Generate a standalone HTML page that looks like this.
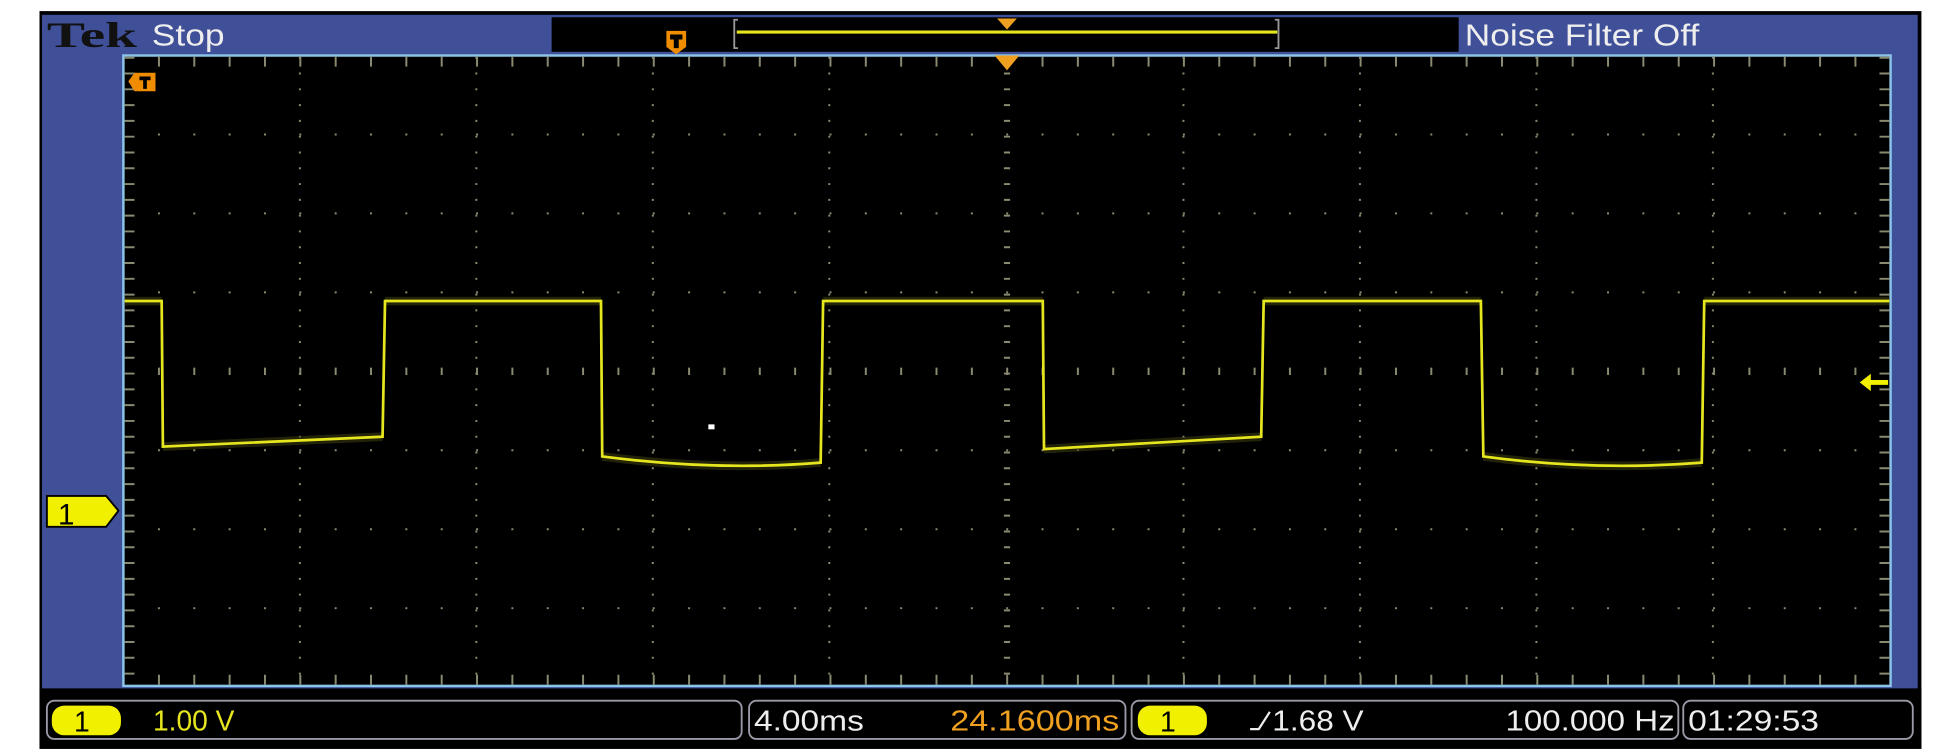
<!DOCTYPE html>
<html><head><meta charset="utf-8"><style>
html,body{margin:0;padding:0;background:#fff;width:1935px;height:755px;overflow:hidden}
svg{display:block}
</style></head><body>
<svg width="1935" height="755" viewBox="0 0 1568 612" preserveAspectRatio="none" xmlns="http://www.w3.org/2000/svg" font-family="Liberation Sans, sans-serif">
<rect x="0" y="0" width="1568" height="612" fill="#fff"/>
<rect x="32" y="9" width="1525" height="598" fill="#000"/>
<rect x="34" y="12" width="1520" height="550" fill="#3f4f98"/>
<rect x="99" y="44" width="1434" height="513" fill="#8cc4e8"/>
<rect x="101" y="46" width="1430" height="509" fill="#000"/>
<g stroke="#8a8a70" stroke-width="1.6">
<line x1="101" y1="109" x2="1531" y2="109" stroke-dasharray="1.6 27.04" stroke-dashoffset="-27"/>
<line x1="101" y1="173" x2="1531" y2="173" stroke-dasharray="1.6 27.04" stroke-dashoffset="-27"/>
<line x1="101" y1="237" x2="1531" y2="237" stroke-dasharray="1.6 27.04" stroke-dashoffset="-27"/>
<line x1="101" y1="365" x2="1531" y2="365" stroke-dasharray="1.6 27.04" stroke-dashoffset="-27"/>
<line x1="101" y1="429" x2="1531" y2="429" stroke-dasharray="1.6 27.04" stroke-dashoffset="-27"/>
<line x1="101" y1="493" x2="1531" y2="493" stroke-dasharray="1.6 27.04" stroke-dashoffset="-27"/>
<line x1="101" y1="301" x2="1531" y2="301" stroke-width="6" stroke-dasharray="1.6 27.04" stroke-dashoffset="-27"/>
</g>
<g stroke="#8a8a70" stroke-width="1.6">
<line x1="243" y1="46" x2="243" y2="555" stroke-dasharray="1.6 11.2"/>
<line x1="386" y1="46" x2="386" y2="555" stroke-dasharray="1.6 11.2"/>
<line x1="529" y1="46" x2="529" y2="555" stroke-dasharray="1.6 11.2"/>
<line x1="672" y1="46" x2="672" y2="555" stroke-dasharray="1.6 11.2"/>
<line x1="959" y1="46" x2="959" y2="555" stroke-dasharray="1.6 11.2"/>
<line x1="1102" y1="46" x2="1102" y2="555" stroke-dasharray="1.6 11.2"/>
<line x1="1245" y1="46" x2="1245" y2="555" stroke-dasharray="1.6 11.2"/>
<line x1="1388" y1="46" x2="1388" y2="555" stroke-dasharray="1.6 11.2"/>
<line x1="816" y1="46" x2="816" y2="555" stroke-width="5" stroke-dasharray="1.6 11.2"/>
<line x1="101" y1="50" x2="1531" y2="50" stroke-width="8" stroke-dasharray="1.6 27.04" stroke-dashoffset="-27"/>
<line x1="101" y1="551" x2="1531" y2="551" stroke-width="8" stroke-dasharray="1.6 27.04" stroke-dashoffset="-27"/>
<line x1="105" y1="46" x2="105" y2="555" stroke-width="8" stroke-dasharray="1.6 11.2"/>
<line x1="1527" y1="46" x2="1527" y2="555" stroke-width="8" stroke-dasharray="1.6 11.2"/>
</g>
<path d="M101 244 L131 244 M312 244 L487 244 M667 244 L845 244 M1024 244 L1200 244 M1381 244 L1531 244 M132 362 L310 354 M488 370 Q580 382 665 375 M846 364 L1022 354 M1202 370 Q1290 382 1379 375" fill="none" stroke="#3a3a10" stroke-width="7" opacity=".6"/>
<path d="M101 244 L131 244 L132 362 L310 354 L312 244 L487 244 L488 370 Q580 382 665 375 L667 244 L845 244 L846 364 L1022 354 L1024 244 L1200 244 L1202 370 Q1290 382 1379 375 L1381 244 L1531 244" fill="none" stroke="#e6e61e" stroke-width="2.2"/>
<rect x="574" y="344" width="5" height="4" fill="#fff"/>
<path d="M1507 310 L1516 303 L1516 308 L1530 308 L1530 312 L1516 312 L1516 317 Z" fill="#f0f000"/>
<path d="M38 402 L86 402 L96 414 L86 427 L38 427 Z" fill="#f0f000" stroke="#000" stroke-width="1.5"/>
<text x="47" y="425" font-size="24" fill="#000">1</text>
<path d="M104 66 L109 59 L126 59 L126 74 L109 74 Z" fill="#f08c00"/>
<path d="M113 62 L122 62 L122 65 L119 65 L119 72 L116 72 L116 65 L113 65 Z" fill="#000"/>
<text x="38" y="38" font-size="29" font-family="Liberation Serif, serif" font-weight="bold" fill="#111" textLength="73" lengthAdjust="spacingAndGlyphs">Tek</text>
<text x="123" y="37" font-size="25" fill="#eee" textLength="59" lengthAdjust="spacingAndGlyphs">Stop</text>
<rect x="447" y="14" width="735" height="28" fill="#000"/>
<path d="M598 16 L595 16 L595 39 L598 39 M1033 16 L1036 16 L1036 39 L1033 39" stroke="#999" stroke-width="1.5" fill="none"/>
<line x1="597" y1="26" x2="1035" y2="26" stroke="#e6e61e" stroke-width="2.5"/>
<path d="M808 15 L824 15 L816 24 Z" fill="#f0a020"/>
<path d="M540 25 L556 25 L556 38 L548 44 L540 38 Z" fill="#f08c00"/>
<path d="M543 28 L553 28 L553 32 L550 32 L550 39 L546 39 L546 32 L543 32 Z" fill="#000"/>
<path d="M806 45 L826 45 L816 57 Z" fill="#f0a020"/>
<text x="1187" y="37" font-size="25" fill="#eee" textLength="190" lengthAdjust="spacingAndGlyphs">Noise Filter Off</text>
<rect x="32" y="558" width="1525" height="49" fill="#000"/>
<g fill="#000" stroke="#9a9aa8" stroke-width="1.5">
<rect x="38" y="568" width="563" height="31" rx="6"/>
<rect x="607" y="568" width="305" height="31" rx="6"/>
<rect x="917" y="568" width="443" height="31" rx="6"/>
<rect x="1364" y="568" width="186" height="31" rx="6"/>
</g>
<rect x="42" y="572" width="56" height="24" rx="10" fill="#f0f000"/>
<text x="60" y="593" font-size="23" fill="#000">1</text>
<text x="124" y="592" font-size="23" fill="#e6e61e" textLength="66" lengthAdjust="spacingAndGlyphs">1.00 V</text>
<text x="611" y="592" font-size="23" fill="#eee" textLength="89" lengthAdjust="spacingAndGlyphs">4.00ms</text>
<text x="770" y="592" font-size="23" fill="#f0a020" textLength="137" lengthAdjust="spacingAndGlyphs">24.1600ms</text>
<rect x="922" y="572" width="56" height="24" rx="10" fill="#f0f000"/>
<text x="940" y="593" font-size="23" fill="#000">1</text>
<path d="M1013 591 L1020 591 L1029 577" stroke="#eee" stroke-width="1.8" fill="none"/>
<text x="1031" y="592" font-size="23" fill="#eee" textLength="74" lengthAdjust="spacingAndGlyphs">1.68 V</text>
<text x="1220" y="592" font-size="23" fill="#eee" textLength="137" lengthAdjust="spacingAndGlyphs">100.000 Hz</text>
<text x="1368" y="592" font-size="23" fill="#eee" textLength="106" lengthAdjust="spacingAndGlyphs">01:29:53</text>
</svg>
</body></html>
